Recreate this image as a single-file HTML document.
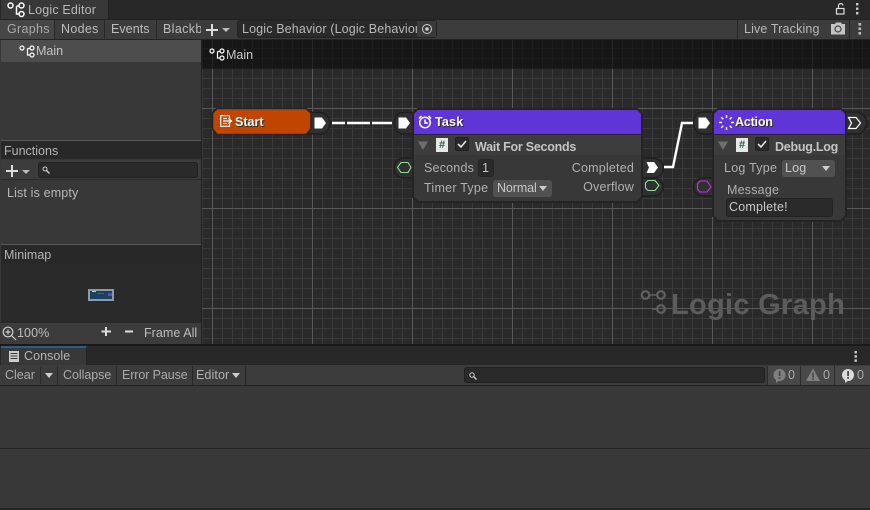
<!DOCTYPE html>
<html><head><meta charset="utf-8"><style>
html,body{margin:0;padding:0;background:#383838}
#r{position:relative;width:870px;height:510px;overflow:hidden;background:#383838;font-family:"Liberation Sans",sans-serif;font-size:12.5px;color:#bdbdbd}
#r div{position:absolute;box-sizing:border-box}
.t{white-space:nowrap;line-height:16px;height:16px}
.b{font-weight:bold}
.s{text-shadow:1px 1px 0 #2a2a2a}
svg{position:absolute;overflow:visible}
</style></head><body><div id="r">
<!-- title bar -->
<div style="left:0;top:0;width:870px;height:19px;background:#282828"></div>
<div style="left:1px;top:0;width:108px;height:19px;background:#383838;border-right:1px solid #222"></div>
<div class="t" style="left:28px;top:2px;color:#b8b8b8;letter-spacing:.17px">Logic Editor</div>
<svg style="left:0;top:0" width="30" height="20" fill="none" stroke="#fff" stroke-width="1.5"><circle cx="10.500" cy="5.500" r="2.500"/><circle cx="21.500" cy="5.500" r="2.500"/><circle cx="21.500" cy="14" r="2.500"/><path d="M16.500 6.500V14H19M16.500 6H19"/></svg>
<svg style="left:834px;top:2px" width="14" height="13" fill="none" stroke="#ddd" stroke-width="1.2"><rect x="2.500" y="6.500" width="7.500" height="5.500"/><path d="M4.500 6V3.500C4.500 1 9 1 9 3.500"/></svg>
<svg style="left:855px;top:3px" width="4" height="12" fill="#ccc"><rect x="1" y="0" width="2.400" height="2.400"/><rect x="1" y="4.500" width="2.400" height="2.400"/><rect x="1" y="9" width="2.400" height="2.400"/></svg>
<!-- tabs row -->
<div style="left:0;top:19px;width:870px;height:21px;background:#3c3c3c;border-bottom:1px solid #232323;border-top:1px solid #232323"></div>
<div style="left:0;top:20px;width:54px;height:19px;background:#464646"></div>
<div style="left:54px;top:20px;width:1px;height:19px;background:#282828"></div>
<div style="left:104px;top:20px;width:1px;height:19px;background:#282828"></div>
<div style="left:156px;top:20px;width:1px;height:19px;background:#282828"></div>
<div class="t" style="left:7px;top:21px;color:#a8a8a8;letter-spacing:.3px">Graphs</div>
<div class="t" style="left:61px;top:21px;letter-spacing:.3px">Nodes</div>
<div class="t" style="left:111px;top:21px;letter-spacing:.05px">Events</div>
<div style="left:163px;top:21px;width:38px;height:16px;overflow:hidden"><div class="t" style="left:0;top:0;letter-spacing:.35px">Blackboard</div></div>
<!-- left panel -->
<div style="left:0;top:40px;width:201px;height:304px;background:#383838"></div>
<div style="left:201px;top:40px;width:1px;height:304px;background:#1f1f1f"></div>
<div style="left:1px;top:40px;width:200px;height:22px;background:#4d4d4d"></div>
<svg style="left:0;top:40px" width="40" height="20" fill="none" stroke="#fff" stroke-width="1.2"><circle cx="22" cy="8" r="2"/><circle cx="32" cy="8" r="2"/><circle cx="32" cy="15" r="2"/><path d="M27.500 8.500V15H30M27.500 8.500H30"/></svg>
<div class="t" style="left:36px;top:43px;color:#c4c4c4">Main</div>
<div style="left:1px;top:140px;width:200px;height:1px;background:#5a5a5a"></div>
<div style="left:1px;top:141px;width:200px;height:18px;background:#282828"></div>
<div class="t" style="left:4px;top:143px;color:#b4b4b4">Functions</div>
<div style="left:1px;top:160px;width:200px;height:20px;background:#3c3c3c;border-bottom:1px solid #2a2a2a"></div>
<svg style="left:5px;top:164px" width="30" height="14" fill="none"><path d="M7 1V13M1 7H13" stroke="#ddd" stroke-width="2"/><path d="M17 6H25L21 10Z" fill="#bbb"/></svg>
<div style="left:38px;top:162px;width:160px;height:16px;background:#2a2a2a;border:1px solid #212121;border-radius:3px"></div>
<svg style="left:41px;top:165px" width="10" height="10" fill="none" stroke="#ccc"><circle cx="4" cy="4" r="2"/><path d="M5.500 5.500L8.500 8.500" stroke-width="1.400"/></svg>
<div class="t" style="left:7px;top:185px;color:#b8b8b8;letter-spacing:.15px">List is empty</div>
<div style="left:1px;top:244px;width:200px;height:1px;background:#5a5a5a"></div>
<div style="left:1px;top:245px;width:200px;height:19px;background:#282828"></div>
<div class="t" style="left:4px;top:247px;color:#b4b4b4">Minimap</div>
<div style="left:1px;top:264px;width:200px;height:59px;background:#2a2a2a"></div>
<div style="left:88px;top:289px;width:26px;height:12px;background:#1f3f60;border:2px solid #8b99a8"></div>
<div style="left:92px;top:291px;width:4px;height:1px;background:#ccc"></div>
<div style="left:97px;top:293px;width:7px;height:1px;background:#5a44e0"></div>
<div style="left:108px;top:293px;width:4px;height:3px;background:#5a44e0"></div>
<div style="left:1px;top:323px;width:200px;height:21px;background:#3c3c3c"></div>
<svg style="left:2px;top:326px" width="15" height="15" fill="none" stroke="#ccc" stroke-width="1.200"><circle cx="6" cy="6" r="4.800"/><path d="M3.500 6H8.500M6 3.500V8.500M9.500 9.500L14 14"/></svg>
<div class="t" style="left:17px;top:325px;letter-spacing:.1px">100%</div>
<svg style="left:101px;top:326px" width="34" height="12" fill="none" stroke="#ddd" stroke-width="2"><path d="M5 1V10M0.500 5.500H10"/><path d="M24 5.500H32"/></svg>
<div class="t" style="left:144px;top:325px;letter-spacing:.05px">Frame All</div>
<!-- graph -->
<div style="left:202px;top:40px;width:668px;height:304px;background-color:#2a2a2a;background-image:linear-gradient(#585858 1px,transparent 1px),linear-gradient(90deg,#585858 1px,transparent 1px),linear-gradient(#3a3a3a 1px,transparent 1px),linear-gradient(90deg,#3a3a3a 1px,transparent 1px);background-size:100px 100px,100px 100px,10px 10px,10px 10px;background-position:0 68px,10px 0,0 8px,0 0"></div>
<div style="left:202px;top:40px;width:668px;height:29px;background:rgba(10,10,10,.62)"></div>
<svg style="left:200px;top:40px" width="40" height="26" fill="none" stroke="#fff" stroke-width="1.200"><circle cx="12" cy="11" r="2"/><circle cx="22" cy="11" r="2"/><circle cx="22" cy="18" r="2"/><path d="M17.500 11.500V18H20M17.500 11.500H20"/></svg>
<div class="t" style="left:226px;top:47px;color:#c8c8c8">Main</div>
<!-- object row over -->
<svg style="left:205px;top:23px" width="30" height="14" fill="none"><path d="M7 1V13M1 7H13" stroke="#ddd" stroke-width="2"/><path d="M17 5H25L21 9Z" fill="#bbb"/></svg>
<div style="left:237px;top:20px;width:200px;height:18px;background:#2a2a2a;border:1px solid #222;border-radius:3px"></div>
<div style="left:417px;top:21px;width:19px;height:16px;background:#3a3a3a"></div>
<div style="left:242px;top:21px;width:175px;height:16px;overflow:hidden"><div class="t" style="left:0;top:0;color:#b8b8b8;letter-spacing:.14px">Logic Behavior (Logic Behavior)</div></div>
<svg style="left:421px;top:23px" width="12" height="12" fill="none" stroke="#ccc"><circle cx="6" cy="6" r="4.500"/><circle cx="6" cy="6" r="1.800" fill="#ccc" stroke="none"/></svg>
<div style="left:737px;top:20px;width:1px;height:19px;background:#262626"></div>
<div class="t" style="left:744px;top:21px;color:#b8b8b8;letter-spacing:.15px">Live Tracking</div>
<svg style="left:830px;top:22px" width="16" height="13"><path d="M1 2H5L6 0.500H11L12 2H15V12.500H1Z" fill="#c4c4c4"/><circle cx="8" cy="7" r="3" fill="none" stroke="#444" stroke-width="1.200"/></svg>
<div style="left:849px;top:20px;width:1px;height:19px;background:#262626"></div>
<svg style="left:858px;top:23px" width="4" height="13" fill="#bbb"><rect x="0.500" y="0" width="2.600" height="2.600"/><rect x="0.500" y="4.500" width="2.600" height="2.600"/><rect x="0.500" y="9" width="2.600" height="2.600"/></svg>
<!-- connections & ports -->
<svg style="left:0;top:0" width="870" height="344" fill="none">
<g fill="#303030" stroke="#1e1e1e" stroke-width="1.400"><path d="M308 112.500H320C333 112.500 333 134 320 134H308Z"/><path d="M416 112.500H404C391 112.500 391 134 404 134H416Z"/><path d="M416 158H404C391 158 391 178 404 178H416Z"/><path d="M640 158H652C667 158 667 178 652 178H640Z"/><path d="M640 178H652C667 178 667 196 652 196H640Z"/><path d="M716 112H704C690 112 690 134 704 134H716Z"/><path d="M716 178H704C690 178 690 196 704 196H716Z"/><path d="M844 112H856C870 112 870 134 856 134H844Z"/></g>
<path d="M332 123H345M347 123H370M372 123H392" stroke="#fff" stroke-width="2.400"/>
<path d="M664 167H673L682 123H693" stroke="#fff" stroke-width="2.400"/>
<g fill="#fff"><path d="M314.500 117.500H322L326 123L322 128.500H314.500Z"/><path d="M398.500 117.500H406L410 123L406 128.500H398.500Z"/><path d="M698.500 117.500H706L710 123L706 128.500H698.500Z"/><path d="M646.500 162H654L658 167.500L654 173H646.500L649 167.500Z"/></g>
<path d="M848.500 117.500H856L860.500 123L856 128.500H848.500L851.500 123Z" stroke="#fff" stroke-width="1.200"/>
<path d="M397.500 167.500L401 162.500H408L411 167.500L408 172.500H401Z" stroke="#8fdc9a" stroke-width="1.100"/>
<path d="M645.500 183L648 180.500H655L659 185.500L655 190.500H648L645.500 188Z" stroke="#8fdc9a" stroke-width="1.100"/>
<path d="M697.500 184L700 181H707L711 187L707 192H700L697.500 189Z" stroke="#c62ee8" stroke-width="1.100"/>
</svg>
<!-- start node -->
<svg style="left:212px;top:108px" width="100" height="28"><path d="M5 .5H94L99 5V21L94 26.500H5L.5 21V5Z" fill="#c04500" stroke="#262626" stroke-width="1.600"/></svg>
<svg style="left:220px;top:115px" width="13" height="13" fill="none" stroke="#fff" stroke-width="1.200"><path d="M9.500 3.500V.7H.7V11.300H9.500V8.500"/><path d="M3 6H11M8.500 3.500L11.500 6L8.500 8.500M3 3.500H7M3 8.500H7"/></svg>
<div class="t b s" style="left:235px;top:114px;color:#fff">Start</div>
<!-- task node -->
<svg style="left:412px;top:108px" width="232" height="96"><path d="M6 1H225L230 6V89L225 94H6L1 89V6Z" fill="#383838" stroke="#242424" stroke-width="2"/><path d="M6 2H225L229 6V26H2V6Z" fill="#6035d8"/><rect x="2" y="27" width="227" height="20" fill="#3d3d3d"/><rect x="2" y="26" width="227" height="1" fill="#262626"/></svg>
<svg style="left:418px;top:115px" width="15" height="15" fill="none" stroke="#fff" stroke-width="1.500"><circle cx="7" cy="7.500" r="5.300"/><path d="M7 4.500V8H10M1 3.500L3.500 1M13 3.500L10.500 1"/></svg>
<div class="t b s" style="left:435px;top:114px;color:#fff;letter-spacing:.2px">Task</div>
<svg style="left:417px;top:141px" width="12" height="10"><path d="M1 .5H11L6 9Z" fill="#6e6e6e"/></svg>
<div style="left:436px;top:138px;width:12px;height:14px;background:#e8e8e8;color:#1f5f3a;font-size:11px;font-weight:bold;line-height:14px;text-align:center">#</div>
<div style="left:455px;top:137px;width:14px;height:14px;background:#2a2a2a;border:1px solid #222;border-radius:2px"></div>
<svg style="left:457px;top:139px" width="10" height="10" fill="none" stroke="#e4e4e4" stroke-width="1.600"><path d="M1 5L4 8L9 2"/></svg>
<div class="t b" style="left:475px;top:139px;color:#c4c4c4;letter-spacing:-.25px">Wait For Seconds</div>
<div class="t" style="left:424px;top:160px;color:#b0b0b0;letter-spacing:.2px">Seconds</div>
<div style="left:478px;top:159px;width:16px;height:18px;background:#2a2a2a;border:1px solid #262626;border-radius:3px"></div>
<div class="t" style="left:482px;top:160px;color:#c4c4c4">1</div>
<div class="t" style="left:424px;top:180px;color:#b0b0b0;letter-spacing:.25px">Timer Type</div>
<div style="left:493px;top:180px;width:59px;height:17px;background:#515151;border-radius:3px"></div>
<div class="t" style="left:497px;top:180px;color:#c8c8c8;letter-spacing:-.1px">Normal</div>
<svg style="left:539px;top:186px" width="9" height="5"><path d="M0 0H8L4 5Z" fill="#ccc"/></svg>
<div class="t" style="right:236px;top:160px;color:#b0b0b0;letter-spacing:.2px">Completed</div>
<div class="t" style="right:236px;top:179px;color:#b0b0b0;letter-spacing:.2px">Overflow</div>
<!-- action node -->
<svg style="left:712px;top:108px" width="136" height="115"><path d="M6 1H129L134 6V108L129 113H6L1 108V6Z" fill="#383838" stroke="#242424" stroke-width="2"/><path d="M6 2H129L133 6V26H2V6Z" fill="#6035d8"/><rect x="2" y="27" width="131" height="20" fill="#3d3d3d"/><rect x="2" y="26" width="131" height="1" fill="#262626"/></svg>
<svg style="left:719px;top:115px" width="15" height="15" fill="none" stroke="#fff" stroke-width="1.400"><path d="M7.500 0V3M7.500 12V15M0 7.500H3M12 7.500H15M2.200 2.200L4.300 4.300M10.700 10.700L12.800 12.800M12.800 2.200L10.700 4.300M4.300 10.700L2.200 12.800"/></svg>
<div class="t b s" style="left:735px;top:114px;color:#fff;letter-spacing:-.2px">Action</div>
<svg style="left:717px;top:141px" width="12" height="10"><path d="M1 .5H11L6 9Z" fill="#6e6e6e"/></svg>
<div style="left:736px;top:138px;width:12px;height:14px;background:#e8e8e8;color:#1f5f3a;font-size:11px;font-weight:bold;line-height:14px;text-align:center">#</div>
<div style="left:755px;top:137px;width:14px;height:14px;background:#2a2a2a;border:1px solid #222;border-radius:2px"></div>
<svg style="left:757px;top:139px" width="10" height="10" fill="none" stroke="#e4e4e4" stroke-width="1.600"><path d="M1 5L4 8L9 2"/></svg>
<div class="t b" style="left:775px;top:139px;color:#c4c4c4;letter-spacing:-.25px">Debug.Log</div>
<div class="t" style="left:724px;top:160px;color:#b0b0b0;letter-spacing:.25px">Log Type</div>
<div style="left:782px;top:160px;width:53px;height:17px;background:#515151;border-radius:3px"></div>
<div class="t" style="left:785px;top:160px;color:#c8c8c8;letter-spacing:.2px">Log</div>
<svg style="left:822px;top:166px" width="9" height="5"><path d="M0 0H8L4 5Z" fill="#ccc"/></svg>
<div class="t" style="left:727px;top:182px;color:#b0b0b0;letter-spacing:.2px">Message</div>
<div style="left:726px;top:198px;width:107px;height:19px;background:#2a2a2a;border:1px solid #222;border-radius:3px"></div>
<div class="t" style="left:729px;top:199px;color:#c8c8c8;letter-spacing:.2px">Complete!</div>
<!-- watermark -->
<svg style="left:638px;top:288px" width="32" height="30" fill="none" stroke="#606060" stroke-width="2.200"><circle cx="7.500" cy="7" r="3.800"/><circle cx="23" cy="7" r="3.800"/><circle cx="23" cy="21" r="3.800"/><path d="M11.500 7H19M14 21H19" stroke-width="1.400"/></svg>
<div class="t b" style="left:671px;top:287px;height:36px;line-height:36px;font-size:29px;color:#5c5c5c;letter-spacing:.3px">Logic Graph</div>
<!-- console -->
<div style="left:0;top:344px;width:870px;height:2px;background:#1a1a1a"></div>
<div style="left:0;top:346px;width:870px;height:20px;background:#282828"></div>
<div style="left:1px;top:346px;width:86px;height:20px;background:#383838;border-top:2px solid #2c5d87;border-right:1px solid #222"></div>
<svg style="left:8px;top:350px" width="12" height="13"><rect x="1" y="1" width="10" height="11" fill="#ccc"/><path d="M2.500 3.500H9.500M2.500 6H9.500M2.500 8.500H9.500" stroke="#383838"/></svg>
<div class="t" style="left:24px;top:348px;color:#b4b4b4;letter-spacing:.05px">Console</div>
<svg style="left:854px;top:351px" width="4" height="12" fill="#ccc"><rect x="0.500" y="0" width="2.400" height="2.400"/><rect x="0.500" y="4.200" width="2.400" height="2.400"/><rect x="0.500" y="8.400" width="2.400" height="2.400"/></svg>
<div style="left:0;top:365px;width:870px;height:21px;background:#3c3c3c;border-bottom:1px solid #232323"></div>
<div class="t" style="left:5px;top:367px;color:#aaa;letter-spacing:0">Clear</div>
<div style="left:40px;top:367px;width:1px;height:17px;background:#2c2c2c"></div>
<svg style="left:45px;top:373px" width="9" height="5"><path d="M0 0H8L4 5Z" fill="#ccc"/></svg>
<div style="left:57px;top:366px;width:1px;height:19px;background:#282828"></div>
<div class="t" style="left:63px;top:367px;color:#aaa;letter-spacing:-.05px">Collapse</div>
<div style="left:116px;top:366px;width:1px;height:19px;background:#282828"></div>
<div class="t" style="left:122px;top:367px;color:#aaa;letter-spacing:-.1px">Error Pause</div>
<div style="left:192px;top:366px;width:1px;height:19px;background:#282828"></div>
<div class="t" style="left:196px;top:367px;color:#b0b0b0;letter-spacing:.1px">Editor</div>
<svg style="left:232px;top:373px" width="9" height="5"><path d="M0 0H8L4 5Z" fill="#ccc"/></svg>
<div style="left:245px;top:366px;width:1px;height:19px;background:#282828"></div>
<div style="left:464px;top:367px;width:301px;height:16px;background:#2a2a2a;border:1px solid #212121;border-radius:3px"></div>
<svg style="left:468px;top:371px" width="10" height="10" fill="none" stroke="#ccc"><circle cx="4" cy="4" r="2.200"/><path d="M5.500 5.500L8.500 8.500" stroke-width="1.400"/></svg>
<div style="left:767px;top:366px;width:103px;height:19px;background:#484848"></div>
<div style="left:800px;top:366px;width:1px;height:19px;background:#2c2c2c"></div>
<div style="left:834px;top:366px;width:1px;height:19px;background:#2c2c2c"></div>
<div style="left:767px;top:366px;width:1px;height:19px;background:#2c2c2c"></div>
<svg style="left:772px;top:368px" width="90" height="15"><circle cx="7.500" cy="7" r="6" fill="#808080"/><path d="M4 11L4 15L8 12Z" fill="#808080"/><rect x="6.700" y="3" width="1.800" height="5" fill="#484848"/><rect x="6.700" y="9" width="1.800" height="1.800" fill="#484848"/><path d="M41 .5L48 13H34Z" fill="#808080"/><rect x="40.200" y="4.500" width="1.700" height="5" fill="#484848"/><rect x="40.200" y="10.300" width="1.700" height="1.700" fill="#484848"/><circle cx="76" cy="7" r="6" fill="#dcdcdc"/><path d="M73 11L73 15L77 12Z" fill="#dcdcdc"/><rect x="75.200" y="3" width="1.800" height="5" fill="#484848"/><rect x="75.200" y="9" width="1.800" height="1.800" fill="#484848"/></svg>
<div class="t" style="left:788px;top:367px;color:#aaa">0</div>
<div class="t" style="left:823px;top:367px;color:#aaa">0</div>
<div class="t" style="left:857px;top:367px;color:#aaa">0</div>
<div style="left:0;top:448px;width:870px;height:1px;background:#262626"></div>
<div style="left:0;top:508px;width:870px;height:2px;background:#232323"></div>
</div></body></html>
